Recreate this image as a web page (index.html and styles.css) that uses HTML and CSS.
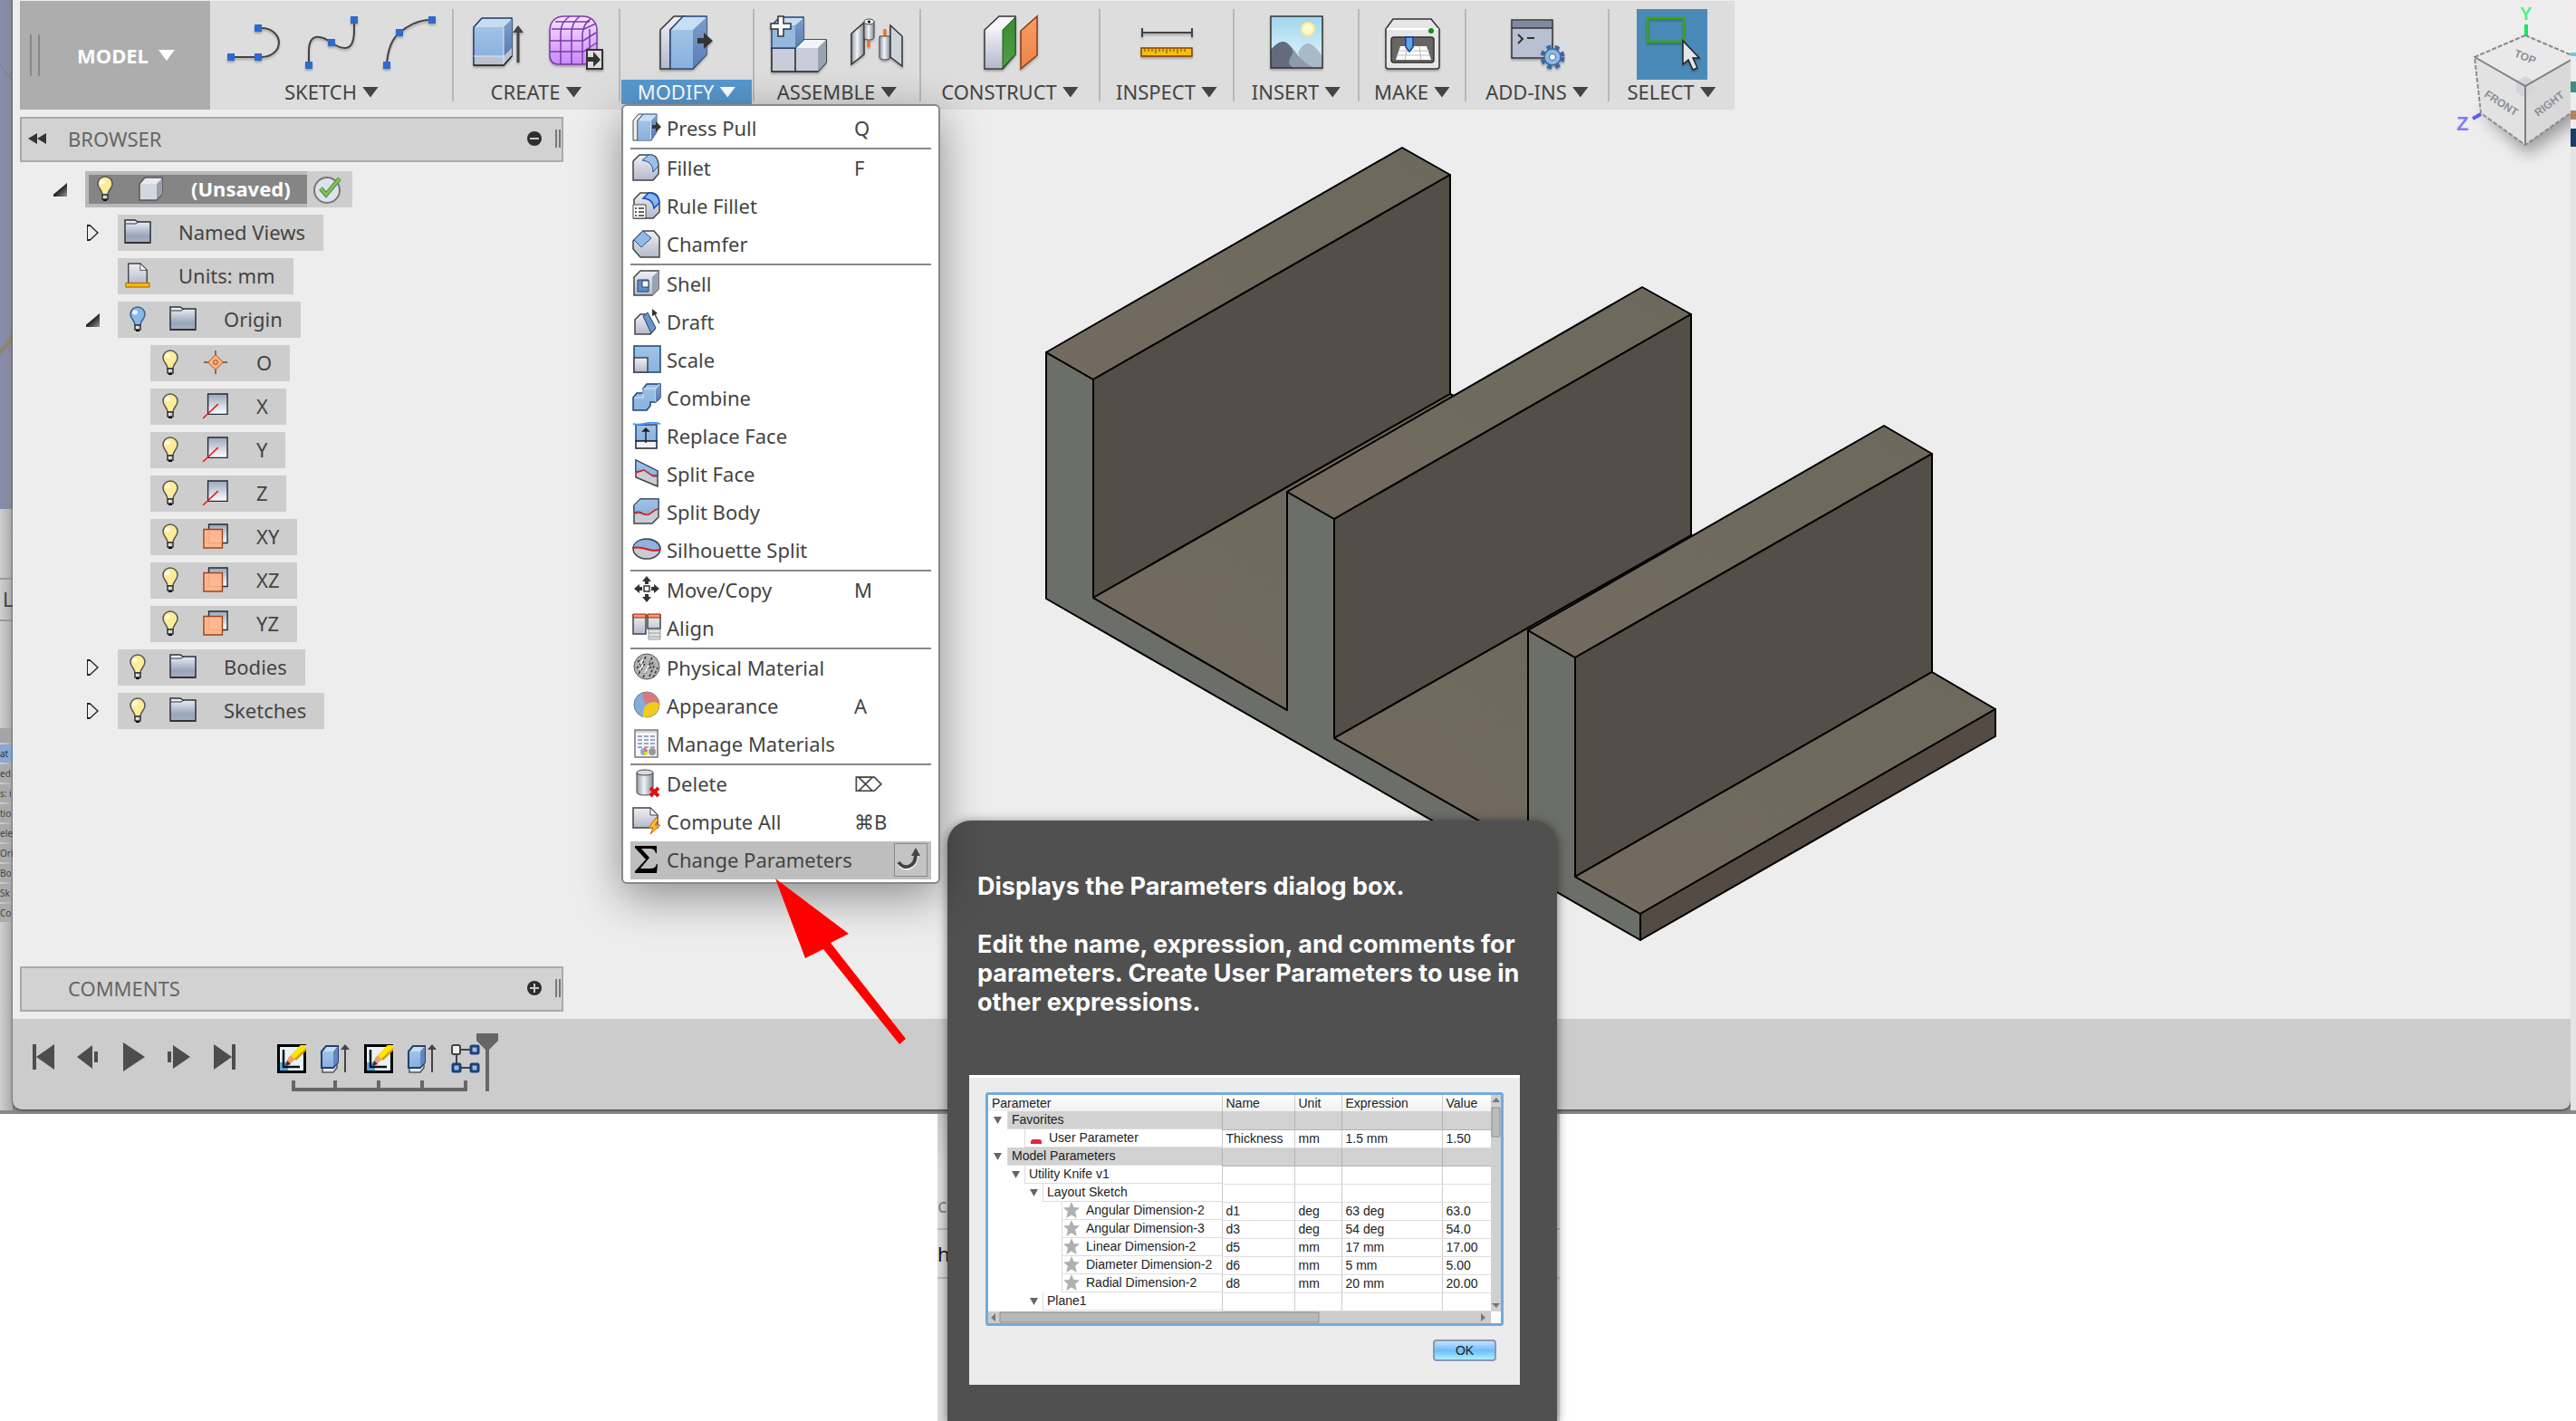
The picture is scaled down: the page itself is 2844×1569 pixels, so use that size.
FILE: index.html
```html
<!DOCTYPE html>
<html lang="en">
<head>
<meta charset="utf-8">
<title>Modify menu</title>
<link rel="stylesheet" href="styles.css">
</head>
<body>
<svg class="defs" width="0" height="0" aria-hidden="true">
  <defs>
    <linearGradient id="blue" x1="0" y1="0" x2="0" y2="1"><stop offset="0" stop-color="#a0c3e6"/><stop offset="1" stop-color="#8ab2de"/></linearGradient>
    <linearGradient id="blueSide" x1="0" y1="0" x2="0" y2="1"><stop offset="0" stop-color="#7c9ccb"/><stop offset="1" stop-color="#5a7fb4"/></linearGradient>
    <linearGradient id="gray" x1="0" y1="0" x2="0" y2="1"><stop offset="0" stop-color="#f0f0f5"/><stop offset="1" stop-color="#b4b9cb"/></linearGradient>
    <linearGradient id="folderFill" x1="0" y1="0" x2="0" y2="1"><stop offset="0" stop-color="#f4f6f9"/><stop offset=".7" stop-color="#99a5bb"/><stop offset="1" stop-color="#a5afc3"/></linearGradient>
    <linearGradient id="grayUp" x1="0" y1="0" x2="0" y2="1"><stop offset="0" stop-color="#9aa6bb"/><stop offset="1" stop-color="#fff"/></linearGradient>
    <linearGradient id="cyl" x1="0" y1="0" x2="1" y2="0"><stop offset="0" stop-color="#8f99a5"/><stop offset=".45" stop-color="#f2f4f7"/><stop offset="1" stop-color="#7d8894"/></linearGradient>
    <linearGradient id="green" x1="0" y1="0" x2="0" y2="1"><stop offset="0" stop-color="#3c8a32"/><stop offset="1" stop-color="#4f9e45"/></linearGradient>
    <linearGradient id="orange" x1="0" y1="0" x2="0" y2="1"><stop offset="0" stop-color="#fb9b62"/><stop offset="1" stop-color="#e8864c"/></linearGradient>
    <linearGradient id="purple" x1="0" y1="0" x2="0" y2="1"><stop offset="0" stop-color="#f6e4ff"/><stop offset="1" stop-color="#c987ff"/></linearGradient>
    <linearGradient id="sky" x1="0" y1="0" x2="0" y2="1"><stop offset="0" stop-color="#9fd6ee"/><stop offset="1" stop-color="#e8f7fc"/></linearGradient>
    <linearGradient id="topFace" x1="0" y1="1" x2="1" y2="0"><stop offset="0" stop-color="#736a60"/><stop offset="1" stop-color="#6c695c"/></linearGradient>
  </defs>
  <symbol id="bulb" viewBox="0 0 18 28"><path d="M9 1a8 8 0 0 0-8 8c0 5 5 7 5 12h6c0-5 5-7 5-12a8 8 0 0 0-8-8z" fill="#ffeb98" stroke="#555" stroke-width="1.5"/><ellipse cx="6" cy="7" rx="3" ry="2.5" fill="#fffbe6"/><path d="M6 21h6v5H6z" fill="#ccc" stroke="#333" stroke-width="1.5"/><path d="M8 22v3" stroke="#fff"/><path d="M7 27h4" stroke="#111" stroke-width="2"/></symbol>
  <symbol id="bulb-off" viewBox="0 0 18 28"><path d="M9 1a8 8 0 0 0-8 8c0 5 5 7 5 12h6c0-5 5-7 5-12a8 8 0 0 0-8-8z" fill="#86b9ea" stroke="#3f5f85" stroke-width="1.5"/><ellipse cx="6" cy="7" rx="3" ry="2.5" fill="#e8f4ff"/><path d="M6 21h6v5H6z" fill="#ccc" stroke="#333" stroke-width="1.5"/><path d="M8 22v3" stroke="#fff"/><path d="M7 27h4" stroke="#111" stroke-width="2"/></symbol>
  <symbol id="folder" viewBox="0 0 30 28"><path d="M1 26V1h11l3 2h14v23z" fill="url(#folderFill)" stroke="#2b3140" stroke-width="1.5"/><path d="M2 5h11l3-2" fill="none" stroke="#2b3140"/><path d="M1 26h28" stroke="#333" stroke-width="2"/></symbol>
  <symbol id="axis" viewBox="0 0 30 30"><path d="M6 1h23v24H6z" fill="url(#grayUp)" stroke="#222b3a" stroke-width="1.5"/><path d="M0 30L18 13" stroke="#f01010" stroke-width="1.5"/></symbol>
  <symbol id="plane" viewBox="0 0 30 30"><path d="M7 1h22v22H7z" fill="url(#grayUp)" stroke="#222b3a" stroke-width="1.5"/><path d="M1 7h22v22H1z" fill="#ffb48a" fill-opacity=".92" stroke="#a0441a" stroke-width="1.5"/></symbol>
  <symbol id="sketch-feature" viewBox="0 0 32 32"><path d="M1.5 1.5h29v29h-29z" fill="#e9f3fb" stroke="#000" stroke-width="3"/><path d="M3 20h9v9H3z" fill="#4db0e8"/><path d="M7 6v19h18" fill="none" stroke="#111" stroke-width="2.5"/><path d="M9 24l3-9L26 1l6 2v3L15 21z" fill="#f0a068"/><path d="M15 12L26 1h6v5L20 17z" fill="#ffe600"/><path d="M19 16L32 4v3L21 18z" fill="#d69a00"/><path d="M9 24l2-6 4 4z" fill="#333"/></symbol>
  <symbol id="extrude-feature" viewBox="0 0 32 32"><path d="M2 25h12l4-6v7l-4 5H2z" fill="#e6e8ee" stroke="#555" stroke-width="1.5"/><path d="M1 8l5-6h13v18l-5 6H1z" fill="#c9def3" stroke="#223f74" stroke-width="2"/><path d="M2 8h12v17H2z" fill="url(#blue)"/><path d="M14 8l5-6v18l-5 5z" fill="#6287bd"/><path d="M27 31V4" stroke="#444" stroke-width="2"/><path d="M22 6l5-6 5 6z" fill="#444"/></symbol>
</svg>

<main class="screen">
  <aside class="behind-left" aria-hidden="true">
    <div class="photo"></div>
    <p class="big-letter">L</p>
    <ul class="clipped-list">
      <li class="lit">at</li><li>ed</li><li>s: i</li><li>tio</li><li>ele</li><li>Ori</li><li>Bo</li><li>Sk</li><li>Co</li>
    </ul>
  </aside>

  <section class="window">
    <div class="viewport">
      <svg class="model" aria-label="Model">
        <g stroke="#000" stroke-width="2" stroke-linejoin="round">
          <path d="M1141 661L1797 1038L1797 1009L1725 968L1725 726L1673 696L1673 937L1459 815L1459 573L1407 543L1407 784L1193 660L1193 419L1141 389Z" fill="#6c6e69"/>
          <path d="M1141 389L1534 163L1587 193L1193 419Z" fill="url(#topFace)"/>
          <path d="M1193 419L1587 193L1587 435L1193 660Z" fill="#534e47"/>
          <path d="M1193 660L1587 435L1593 438L1407 543L1407 784Z" fill="url(#topFace)"/>
          <path d="M1407 543L1799 317L1853 347L1459 573Z" fill="url(#topFace)"/>
          <path d="M1459 573L1853 347L1853 591L1459 815Z" fill="#534e47"/>
          <path d="M1459 815L1853 591L1859 592L1673 696L1673 937Z" fill="url(#topFace)"/>
          <path d="M1673 696L2066 470L2119 501L1725 726Z" fill="url(#topFace)"/>
          <path d="M1725 726L2119 501L2119 742L1725 968Z" fill="#534e47"/>
          <path d="M1725 968L2119 742L2189 783L1797 1009Z" fill="url(#topFace)"/>
          <path d="M1797 1009L2189 783V813L1797 1038Z" fill="#534b44"/>
        </g>
      </svg>

      <svg class="viewcube" width="126" height="180" viewBox="2711 0 126 180" aria-label="View cube">
        <defs><filter id="soft" x="-40%" y="-40%" width="180%" height="180%"><feGaussianBlur stdDeviation="9"/></filter></defs>
        <path d="M2741 125l48 45 60-40v-50z" fill="#000" opacity=".35" filter="url(#soft)"/>
        <path d="M2731 63l56-24 56 24-56 32z" fill="#e9e9e9"/>
        <path d="M2731 63l56 32v65l-49-35z" fill="#e2e2e2"/>
        <path d="M2787 95l56-32-6 62-50 35z" fill="#d9d9d9"/>
        <path d="M2777 90l10-6 10 6v12l-10 6-10-6z" fill="#d3d5d9"/>
        <path d="M2787 39l-56 24 7 62 49 35 50-35M2787 39l56 24" fill="none" stroke="#8c8c8c" stroke-width="2" stroke-dasharray="5 2"/>
        <path d="M2731 63l56 32 56-32M2787 95v65" fill="none" stroke="#808080" stroke-width="2"/>
        <path d="M2788 27v12" stroke="#13e85e" stroke-width="4"/>
        <path d="M2738 126l-9 5" stroke="#5a5af5" stroke-width="4"/>
        <g class="cube-text">
          <text x="2781" y="22" class="axis-y">Y</text>
          <text x="2711" y="144" class="axis-z">Z</text>
          <text x="2741" y="106" transform="rotate(33 2741 106)">FRONT</text>
          <text x="2801" y="129" transform="rotate(-37 2801 129)">RIGHT</text>
          <text x="2774" y="62" transform="rotate(22 2774 62)">TOP</text>
        </g>
      </svg>

      <nav class="toolbar" aria-label="Toolbar">
        <button class="workspace"><span class="grip"></span><span>MODEL</span><i class="tri"></i></button>

        <div class="group">
          <div class="icons">
            <svg class="ico" viewBox="0 0 64 72"><path d="M37 19h4a19 16 0 0 1 0 32H7" fill="none" stroke="#444" stroke-width="2"/><path d="M33 15h8v8h-8zM33 47h8v8h-8zM3 47h8v8H3z" fill="#2e69d0"/></svg>
            <svg class="ico" viewBox="0 0 64 72"><path d="M7 60V45C7 22 22 28 32 35S57 48 57 22V10" fill="none" stroke="#444" stroke-width="2"/><path d="M53 6h8v8h-8zM28 31h8v8h-8zM3 56h8v8H3z" fill="#2e69d0"/></svg>
            <svg class="ico" viewBox="0 0 64 72"><path d="M7 60C8 40 14 30 21 24S42 9 57 10" fill="none" stroke="#444" stroke-width="2"/><path d="M53 6h8v8h-8zM17 20h8v8h-8zM3 56h8v8H3z" fill="#2e69d0"/></svg>
          </div>
          <button class="label">SKETCH<i class="tri"></i></button>
        </div>

        <div class="group">
          <div class="icons">
            <svg class="ico" viewBox="0 0 64 72"><path d="M6 18l9-10h33v42l-9 10H6z" fill="#c6dcf1" stroke="#1c3a68" stroke-width="1.5"/><path d="M7 18h32v32H7z" fill="url(#blue)"/><path d="M39 18l9-9v33l-9 9z" fill="url(#blueSide)"/><path d="M7 50h32v10H7zM39 50l9-9v9l-9 10z" fill="#bcc2d0"/><path d="M39 18v42M6 50h33" stroke="#dfeaf5"/><path d="M6 60h33l9-10" fill="none" stroke="#222" stroke-width="1.5"/><path d="M55 57V22" stroke="#444" stroke-width="3"/><path d="M49 24l6-8 6 8z" fill="#444"/></svg>
            <svg class="ico" viewBox="0 0 64 72"><path d="M4 22C4 12 10 6 20 6h20c10 0 16 6 16 16v18c0 12-6 19-16 19H14C7 59 4 55 4 49z" fill="url(#purple)" stroke="#7d38a8" stroke-width="1.5"/><path d="M16 59V24c0-8 4-14 10-18M28 59V24c0-8 4-14 9-18M40 59V25C41 18 44 12 49 9M48 56V20M4 33h37l14-9M4 45h37l15-10M6 20h36L55 14M10 12h38" fill="none" stroke="#7d38a8" stroke-width="1.5"/><path d="M45 43h17v21H45z" fill="#ddd" stroke="#333" stroke-width="2"/><path d="M45 51h7v-6l8 9-8 8v-6h-7z" fill="#333"/></svg>
          </div>
          <button class="label">CREATE<i class="tri"></i></button>
        </div>

        <div class="group active">
          <div class="icons">
            <svg class="ico" viewBox="0 0 64 72"><path d="M3 21L18 6h12L14 21v43H3z" fill="url(#gray)" stroke="#333" stroke-width="1.5"/><path d="M14 21L28 6h26v42L39 64H14z" fill="#c8def3" stroke="#1f4278" stroke-width="1.5"/><path d="M15 21h24v42H15z" fill="url(#blue)"/><path d="M39 21L54 7v41L39 63z" fill="url(#blueSide)"/><path d="M44 30h7v-6l10 9-10 9v-6h-7z" fill="#333"/></svg>
          </div>
          <button class="label" aria-expanded="true">MODIFY<i class="tri"></i></button>

          <div class="menu" role="menu">
            <button class="item" role="menuitem"><svg viewBox="0 0 32 32"><path d="M1 8l6-7h5L6 8v22H1z" fill="#eee" stroke="#444"/><path d="M6 8l6-7h15v20l-6 9H6z" fill="#c8def3" stroke="#1f4278"/><path d="M6.5 8.5H20v21H6.5z" fill="url(#blue)"/><path d="M21 8l6-6v19l-6 8z" fill="url(#blueSide)"/><path d="M22 13h4V9l6 6-6 6v-4h-4z" fill="#333"/></svg><span>Press Pull</span><kbd>Q</kbd></button>
            <hr>
            <button class="item" role="menuitem"><svg viewBox="0 0 32 32"><path d="M1 9l7-7h12c6 0 9 5 9 12v9l-6 7H1z" fill="url(#gray)" stroke="#444" stroke-width="1.5"/><path d="M11 8l7-6c7-1 10 4 11 12l-6 7c0-8-4-12-12-13z" fill="#9cc2e8" stroke="#2a5088"/></svg><span>Fillet</span><kbd>F</kbd></button>
            <button class="item" role="menuitem"><svg viewBox="0 0 32 32"><path d="M2 9l7-7h12c6 0 9 5 9 12v9l-7 7H2z" fill="url(#gray)" stroke="#444" stroke-width="1.5"/><path d="M12 8l6-6c8-1 12 5 12 11l-6 6c-1-7-5-11-12-11z" fill="#86b6f0" stroke="#0f4bc0" stroke-width="1.5"/><path d="M1 15h14v15H1z" fill="#fff" stroke="#444"/><path d="M3 19h2m2 0h6M3 23h2m2 0h6M3 27h2m2 0h6" stroke="#333" stroke-width="1.5"/></svg><span>Rule Fillet</span></button>
            <button class="item" role="menuitem"><svg viewBox="0 0 32 32"><path d="M1 13L12 2h12l6 7v22H9L1 22z" fill="url(#gray)" stroke="#444" stroke-width="1.5"/><path d="M2 12L12 2l9 8-11 10z" fill="#93bae4" stroke="#2a5088"/></svg><span>Chamfer</span></button>
            <hr>
            <button class="item" role="menuitem"><svg viewBox="0 0 32 32"><path d="M2 9l7-7h20v20l-7 7H2z" fill="url(#gray)" stroke="#444" stroke-width="1.5"/><path d="M22 9l7-7v20l-7 7z" fill="#98a2b0"/><path d="M6 12h12v13H6z" fill="#5f8fc6" stroke="#1f4278"/><path d="M11 13h7v7h-7z" fill="#fff" stroke="#1f4278"/></svg><span>Shell</span></button>
            <button class="item" role="menuitem"><svg viewBox="0 0 32 32"><path d="M3 14l6-6h8l8 16-5 6H3z" fill="url(#gray)" stroke="#444" stroke-width="1.5"/><path d="M12 10l5-4 9 17-5 6z" fill="#6d95cc" stroke="#1f3f70"/><path d="M30 18L24 6" stroke="#444" stroke-width="1.5"/><path d="M22 2l6 5-6 3z" fill="#333"/></svg><span>Draft</span></button>
            <button class="item" role="menuitem"><svg viewBox="0 0 32 32"><path d="M2 1h29v29H2z" fill="url(#blue)" stroke="#1f4278" stroke-width="1.5"/><path d="M2 14h15v16H2z" fill="url(#gray)" stroke="#444" stroke-width="1.5"/></svg><span>Scale</span></button>
            <button class="item" role="menuitem"><svg viewBox="0 0 32 32"><path d="M1 16l4-5h7V6l4-5h15v15l-5 5h-6v4l-4 5H1z" fill="url(#blue)" stroke="#1f4278" stroke-width="1.5"/><path d="M12 6h14l4-5M26 6v15M2 16h10V7" fill="none" stroke="#d9e9f8"/><path d="M26 7l5-6v15l-5 4z" fill="url(#blueSide)"/></svg><span>Combine</span></button>
            <button class="item" role="menuitem"><svg viewBox="0 0 32 32"><path d="M4 4h23v18H4z" fill="url(#blue)" stroke="#1f4278" stroke-width="1.5"/><path d="M1 3c8 3 16-4 30 0" fill="none" stroke="#4b9af5" stroke-width="2"/><path d="M4 22h23v8H4z" fill="#f0f2f6" stroke="#222" stroke-width="1.5"/><path d="M15 24V10M12 11l3-3 3 3z" fill="#222" stroke="#222" stroke-width="1.5"/></svg><span>Replace Face</span></button>
            <button class="item" role="menuitem"><svg viewBox="0 0 32 32"><path d="M4 1l24 12v17L4 20z" fill="#c8cdd6" stroke="#444" stroke-width="1.5"/><path d="M4 1l24 12v6h-5L13 12l-9 2z" fill="url(#blue)" stroke="#1f4278"/><path d="M4 15l9-3 9 6h6" fill="none" stroke="#e31a1a" stroke-width="1.5"/></svg><span>Split Face</span></button>
            <button class="item" role="menuitem"><svg viewBox="0 0 32 32"><path d="M2 9l7-7h20v20l-7 7H2z" fill="#c8ccd6" stroke="#444" stroke-width="1.5"/><path d="M2 17V9l7-7h20v11c-9 2-10 10-17 5-3-2-5-3-10-1z" fill="url(#blue)" stroke="#1f4278"/><path d="M2 18c9-3 11 3 16 1s8-7 11-6" fill="none" stroke="#e31a1a" stroke-width="1.5"/></svg><span>Split Body</span></button>
            <button class="item" role="menuitem"><svg viewBox="0 0 32 32"><ellipse cx="16" cy="15" rx="15" ry="11" fill="#c9ccd6" stroke="#444" stroke-width="1.5"/><path d="M1 14C3 1 28 1 31 15c-12 6-17-4-30-1z" fill="#8fb2df" stroke="#1f4278"/><path d="M1 14c13-3 18 6 30 2" fill="none" stroke="#e31a1a" stroke-width="2"/></svg><span>Silhouette Split</span></button>
            <hr>
            <button class="item" role="menuitem"><svg viewBox="0 0 32 32"><path d="M13 12h6v6h-6z" fill="#fff" stroke="#333" stroke-width="1.5"/><path d="M16 1l5 6h-3v3h-4V7h-3zM16 30l5-6h-3v-3h-4v3h-3zM2 15l6-5v3h3v4H8v3zM30 15l-6-5v3h-3v4h3v3z" fill="#333"/></svg><span>Move/Copy</span><kbd>M</kbd></button>
            <button class="item" role="menuitem"><svg viewBox="0 0 32 32"><path d="M1 2h14v21H1zM17 2h14v15H17z" fill="url(#gray)" stroke="#444" stroke-width="1.5"/><path d="M18 18h13v11H18zM18 22h13M18 26h13" fill="#e2e3e6" stroke="#999"/><path d="M1 1h14v4H1zM17 1h14v4H17z" fill="#ff9a6e" stroke="#8c2a10"/></svg><span>Align</span></button>
            <hr>
            <button class="item" role="menuitem"><svg viewBox="0 0 32 32"><circle cx="16" cy="15" r="14" fill="#b4b4b4" stroke="#555"/><path d="M6 10l4-4m-5 11l7-9m-5 15l8-13m-3 17l9-18m-2 17l6-14m-2 15l5-11M15 4l-4 8m11-7l-3 5m-9 4l-2 6m15-10l-4 8" stroke="#333" stroke-width="1.5" stroke-dasharray="3 2"/><path d="M9 12l3-5m-4 12l4-6m2 9l4-8" stroke="#fff" stroke-width="1.5"/></svg><span>Physical Material</span></button>
            <button class="item" role="menuitem"><svg viewBox="0 0 32 32"><circle cx="16" cy="15" r="14" fill="#84acdf" stroke="#777"/><path d="M12 2c8-3 17 3 18 12-7-2-10-2-14 1-4-3-5-8-4-13z" fill="#d97880"/><path d="M16 15c4-3 8-4 14-1 0 9-7 16-18 15-1-6 1-11 4-14z" fill="#f0cb1c"/></svg><span>Appearance</span><kbd>A</kbd></button>
            <button class="item" role="menuitem"><svg viewBox="0 0 32 32"><path d="M3 1h25v30H3z" fill="#f5f6f8" stroke="#777" stroke-width="1.5"/><path d="M4 2h23v2H4z" fill="#cdd2dc"/><path d="M6 8h19M6 12h19M6 16h19M6 20h19" stroke="#9ba6c4" stroke-width="2" stroke-dasharray="5 2"/><circle cx="13" cy="25" r="4" fill="#84acdf"/><path d="M13 25v-4a4 4 0 0 1 4 4z" fill="#d97880"/><path d="M13 25h4a4 4 0 0 1-4 4z" fill="#f0cb1c"/><circle cx="22" cy="25" r="4" fill="#999"/></svg><span>Manage Materials</span></button>
            <hr>
            <button class="item" role="menuitem"><svg viewBox="0 0 32 32"><path d="M5 4v22c0 4 18 4 18 0V4z" fill="url(#cyl)" stroke="#444"/><ellipse cx="14" cy="4" rx="9" ry="3" fill="#d8dbe2" stroke="#444"/><path d="M20 21l9 9m0-9l-9 9" stroke="#d81414" stroke-width="4"/></svg><span>Delete</span><kbd>⌦</kbd></button>
            <button class="item" role="menuitem"><svg viewBox="0 0 32 32"><path d="M1 1h19l8 8v14H1z" fill="url(#gray)" stroke="#444" stroke-width="1.5"/><path d="M20 1v8h8z" fill="#fff" stroke="#444"/><path d="M26 12l-8 11h5l-3 7 11-10h-6l4-6z" fill="#ffb62e" stroke="#c86a08"/></svg><span>Compute All</span><kbd>⌘B</kbd></button>
            <div class="item current" role="menuitem"><svg viewBox="0 0 32 32"><path d="M3 1h24v8h-1c-1-4-3-5-7-5h-9l9 10L9 26h10c5 0 7-1 8-5h1l-1 10H3v-2l12-13L3 3z" fill="#000"/></svg><span>Change Parameters</span><button class="pin" aria-label="Add to toolbar"><svg viewBox="0 0 32 32"><path d="M3 20c6 10 20 6 20-10" fill="none" stroke="#fff" stroke-width="4"/><path d="M3 19c6 9 19 6 19-9" fill="none" stroke="#444" stroke-width="4"/><path d="M17 12l5-9 5 9z" fill="#444"/></svg></button></div>
          </div>
        </div>

        <div class="group">
          <div class="icons">
            <svg class="ico" viewBox="0 0 64 72"><path d="M3 41h26l9-9h25v25l-9 10H3z" fill="#c9cdd8" stroke="#222" stroke-width="1.5"/><path d="M29 41l9-9h25l-9 9z" fill="#f2f3f6"/><path d="M54 41l9-9v25l-9 10z" fill="#98a2b0"/><path d="M29 41v26" stroke="#222" stroke-width="1.5"/><path d="M3 16l9-9h26v25l-9 9H3z" fill="#c8def3" stroke="#1f4278" stroke-width="1.5"/><path d="M4 16h25v24H4z" fill="#94b8e0"/><path d="M29 16l9-8v24l-9 9z" fill="url(#blueSide)"/><path d="M10 6h6v8h8v6h-8v8h-6v-8H2v-6h8z" fill="#fff" stroke="#333" stroke-width="1.5"/></svg>
            <svg class="ico" viewBox="0 0 64 72"><path d="M5 25l14-12v35L5 59z" fill="url(#cyl)" stroke="#333" stroke-width="1.5"/><path d="M19 12v17c0 4 11 4 11 0V12z" fill="url(#cyl)" stroke="#444"/><ellipse cx="24.5" cy="12" rx="5.5" ry="3" fill="#eef0f3" stroke="#444"/><circle cx="24.5" cy="12" r="1.5"/><path d="M24 33v7M42 20v8" stroke="#ff6a10" stroke-width="3"/><path d="M36 28v23c0 4 12 4 12 0V28z" fill="url(#cyl)" stroke="#444"/><path d="M48 16l13 12v33L48 51z" fill="#ced4dc" stroke="#333" stroke-width="1.5"/></svg>
          </div>
          <button class="label">ASSEMBLE<i class="tri"></i></button>
        </div>

        <div class="group">
          <div class="icons">
            <svg class="ico" viewBox="0 0 64 72"><path d="M4 21L20 6h18v42L24 64H4z" fill="#f7f7f7" stroke="#333" stroke-width="1.5"/><path d="M5 21h19v42H5z" fill="url(#gray)"/><path d="M24 21L38 7v41L24 63z" fill="url(#green)" stroke="#1e5a18"/><path d="M44 22L62 6v43L44 64z" fill="url(#orange)" stroke="#8a3a10" stroke-width="1.5"/></svg>
          </div>
          <button class="label">CONSTRUCT<i class="tri"></i></button>
        </div>

        <div class="group">
          <div class="icons">
            <svg class="ico" viewBox="0 0 64 72"><path d="M5 19v10M60 19v10M5 24h55" stroke="#444" stroke-width="2"/><path d="M4 41h56v9H4z" fill="#f3c10a" stroke="#8a3a10" stroke-width="1.5"/><path d="M8 42v3m4-3v3m4-3v3m4-3v5m4-5v3m4-3v3m4-3v5m4-5v3m4-3v3m4-3v5m4-5v3m4-3v3" stroke="#6a4a00"/></svg>
          </div>
          <button class="label">INSPECT<i class="tri"></i></button>
        </div>

        <div class="group">
          <div class="icons">
            <svg class="ico" viewBox="0 0 64 72"><path d="M4 6h57v57H4z" fill="url(#sky)"/><circle cx="45" cy="20" r="7" fill="#fffbd0" stroke="#ffe88a" stroke-width="2"/><path d="M34 46c8-14 14-14 27 4v13H40z" fill="#a9bac6"/><path d="M4 43c12-14 20-8 27 2s17 18 24 18H4z" fill="#8f9aae"/><path d="M4 43c12-14 18-9 22-3 8 10-10 14 3 23H4z" fill="#636b7c"/><path d="M4 6h57v57H4z" fill="none" stroke="#333" stroke-width="1.5"/></svg>
          </div>
          <button class="label">INSERT<i class="tri"></i></button>
        </div>

        <div class="group">
          <div class="icons">
            <svg class="ico" viewBox="0 0 64 72"><path d="M3 20L11 9h42l9 11v41q0 3-3 3H6q-3 0-3-3z" fill="#e6e6e8" stroke="#333" stroke-width="1.5"/><path d="M4 20h57" stroke="#fff" stroke-width="2"/><circle cx="53" cy="22" r="3" fill="#109018"/><rect x="9" y="29" width="47" height="28" rx="3" fill="#666" stroke="#333" stroke-width="1.5"/><path d="M19 39h29l5 15H14z" fill="#fff"/><path d="M17 44h34M15 49h37M27 39l-3 15M40 39l2 15" stroke="#bbb"/><path d="M25 29h8v11l-4 5-4-5z" fill="#5aa8e4" stroke="#153f9a" stroke-width="1.5"/></svg>
          </div>
          <button class="label">MAKE<i class="tri"></i></button>
        </div>

        <div class="group">
          <div class="icons">
            <svg class="ico" viewBox="0 0 64 72"><path d="M4 10h45v42H4z" fill="#b9c0d2" stroke="#333" stroke-width="1.5"/><path d="M5 11h43v8H5z" fill="#8089a0"/><path d="M4 19h45" stroke="#333" stroke-width="1.5"/><path d="M11 26l5 5-5 5M21 30h8" fill="none" stroke="#333" stroke-width="2"/><circle cx="49" cy="51" r="11" fill="none" stroke="#3c6aa0" stroke-width="5" stroke-dasharray="5 4"/><circle cx="49" cy="51" r="9" fill="#8db8e8" stroke="#3c6aa0" stroke-width="1.5"/><circle cx="49" cy="51" r="3.5" fill="#fff" stroke="#3c6aa0"/></svg>
          </div>
          <button class="label">ADD-INS<i class="tri"></i></button>
        </div>

        <div class="group">
          <div class="icons selected">
            <svg class="ico" viewBox="0 0 64 72"><path d="M5 8h40v26H5z" fill="none" stroke="#36a800" stroke-width="2.5"/><path d="M44 33v26l6-5 5 11 5-2-5-11h7z" fill="#e3e5ef" stroke="#222" stroke-width="1.5"/></svg>
          </div>
          <button class="label">SELECT<i class="tri"></i></button>
        </div>
      </nav>

      <header class="panel-head">
        <svg class="rewind" width="20" height="14" viewBox="0 0 20 14"><path d="M10 1v12L0 7zM20 1v12L10 7z" fill="#333"/></svg>
        <h2>BROWSER</h2>
        <button class="round" aria-label="Collapse"><svg width="18" height="18" viewBox="0 0 18 18"><circle cx="9" cy="9" r="8" fill="#2e2e2e"/><path d="M4 9h10" stroke="#ccc" stroke-width="2"/></svg></button>
        <span class="grip small"></span>
      </header>

      <ul class="tree">
        <li><button class="caret open" aria-label="Collapse"></button><div class="node root"><span class="rootbox"><svg class="bulb"><use href="#bulb"/></svg><svg class="nicon" viewBox="0 0 30 28"><path d="M3 9l6-7h19v18l-6 7H3z" fill="#e8eaf0" stroke="#555" stroke-width="1.5"/><path d="M4 9h18v17H4z" fill="#d3d7e0"/><path d="M22 9l6-6v17l-6 6z" fill="#98a0b0"/></svg><b>(Unsaved)</b></span><svg class="check" width="34" height="32" viewBox="0 0 34 32"><circle cx="16" cy="17" r="14" fill="#dde2ec" stroke="#777" stroke-width="2"/><path d="M9 15l6 7L30 4" fill="none" stroke="#4e8a35" stroke-width="5"/><path d="M9 15l6 7L30 4" fill="none" stroke="#7cc45a" stroke-width="3"/></svg></div></li>
        <li class="d1"><button class="caret" aria-label="Expand"></button><div class="node plain"><svg class="nicon"><use href="#folder"/></svg>Named Views</div></li>
        <li class="d1"><span class="caret none"></span><div class="node plain"><svg class="nicon" viewBox="0 0 30 30"><path d="M4 1h14l8 8v16H4z" fill="url(#gray)" stroke="#444" stroke-width="1.5"/><path d="M18 1v8h8z" fill="#fff" stroke="#444"/><path d="M1 24h28v5H1z" fill="#f5b80c" stroke="#a06000"/></svg>Units: mm</div></li>
        <li class="d1"><button class="caret open" aria-label="Collapse"></button><div class="node"><svg class="bulb"><use href="#bulb-off"/></svg><svg class="nicon"><use href="#folder"/></svg>Origin</div></li>
        <li class="d2"><span class="caret none"></span><div class="node"><svg class="bulb"><use href="#bulb"/></svg><svg class="nicon" viewBox="0 0 30 30"><path d="M1 15h28M15 1v28" stroke="#80401a" stroke-width="1.5"/><path d="M15 6l9 9-9 9-9-9z" fill="#ffb183" stroke="#a04a1a"/><circle cx="15" cy="15" r="2.5" fill="none" stroke="#80401a"/></svg>O</div></li>
        <li class="d2"><span class="caret none"></span><div class="node"><svg class="bulb"><use href="#bulb"/></svg><svg class="nicon"><use href="#axis"/></svg>X</div></li>
        <li class="d2"><span class="caret none"></span><div class="node"><svg class="bulb"><use href="#bulb"/></svg><svg class="nicon"><use href="#axis"/></svg>Y</div></li>
        <li class="d2"><span class="caret none"></span><div class="node"><svg class="bulb"><use href="#bulb"/></svg><svg class="nicon"><use href="#axis"/></svg>Z</div></li>
        <li class="d2"><span class="caret none"></span><div class="node"><svg class="bulb"><use href="#bulb"/></svg><svg class="nicon"><use href="#plane"/></svg>XY</div></li>
        <li class="d2"><span class="caret none"></span><div class="node"><svg class="bulb"><use href="#bulb"/></svg><svg class="nicon"><use href="#plane"/></svg>XZ</div></li>
        <li class="d2"><span class="caret none"></span><div class="node"><svg class="bulb"><use href="#bulb"/></svg><svg class="nicon"><use href="#plane"/></svg>YZ</div></li>
        <li class="d1"><button class="caret" aria-label="Expand"></button><div class="node"><svg class="bulb"><use href="#bulb"/></svg><svg class="nicon"><use href="#folder"/></svg>Bodies</div></li>
        <li class="d1"><button class="caret" aria-label="Expand"></button><div class="node"><svg class="bulb"><use href="#bulb"/></svg><svg class="nicon"><use href="#folder"/></svg>Sketches</div></li>
      </ul>

      <header class="panel-head comments">
        <h2>COMMENTS</h2>
        <button class="round" aria-label="Expand"><svg width="18" height="18" viewBox="0 0 18 18"><circle cx="9" cy="9" r="8" fill="#2e2e2e"/><path d="M4 9h10M9 4v10" stroke="#ccc" stroke-width="2"/></svg></button>
        <span class="grip small"></span>
      </header>
    </div>

    <footer class="timeline">
      <div class="controls">
        <button aria-label="Go to start"><svg viewBox="0 0 32 32"><path d="M4 2h4v28H4zM8 16L28 2v28z"/></svg></button>
        <button aria-label="Step back"><svg viewBox="0 0 32 32"><path d="M3 16L20 3v26zM22 10h4v12h-4z"/></svg></button>
        <button aria-label="Play"><svg viewBox="0 0 32 32"><path d="M4 0v32l24-16z"/></svg></button>
        <button aria-label="Step forward"><svg viewBox="0 0 32 32"><path d="M3 10h4v12H3zM9 3v26l19-13z"/></svg></button>
        <button aria-label="Go to end"><svg viewBox="0 0 32 32"><path d="M4 2v28l20-14zM24 2h4v28h-4z"/></svg></button>
      </div>
      <div class="features">
        <div class="feature-row">
          <button aria-label="Sketch"><svg><use href="#sketch-feature"/></svg></button>
          <button aria-label="Extrude"><svg><use href="#extrude-feature"/></svg></button>
          <button aria-label="Sketch"><svg><use href="#sketch-feature"/></svg></button>
          <button aria-label="Extrude"><svg><use href="#extrude-feature"/></svg></button>
          <button aria-label="Pattern"><svg viewBox="0 0 32 32"><path d="M6 6h20M6 6v20h20" fill="none" stroke="#444" stroke-width="2"/><rect x="1" y="1" width="9" height="10" rx="2" fill="#eee" stroke="#444" stroke-width="2"/><g fill="#8fbdf0" stroke="#1f3f78" stroke-width="3"><rect x="22" y="2" width="8" height="8" rx="1"/><rect x="2" y="22" width="8" height="8" rx="1"/><rect x="22" y="22" width="8" height="8" rx="1"/></g></svg></button>
        </div>
        <svg class="bracket" width="240" height="12" viewBox="0 0 240 12"><path d="M26 0v10h190V0M72 0v10M120 0v10M168 0v10" fill="none" stroke="#666" stroke-width="4"/></svg>
        <svg class="marker" width="24" height="64" viewBox="0 0 24 64"><path d="M0 0h24v8L14 18v46h-4V18L0 8z" fill="#666"/></svg>
      </div>
    </footer>
  </section>

  <aside class="behind-right" aria-hidden="true"></aside>
</main>

<div class="behind-bottom" aria-hidden="true"><p>c</p><p class="dark">h</p></div>

<section class="tooltip" role="tooltip">
  <p>Displays the Parameters dialog box.</p>
  <p>Edit the name, expression, and comments for parameters. Create User Parameters to use in other expressions.</p>
  <div class="preview">
    <div class="frame">
      <table>
        <colgroup><col><col class="c-name"><col class="c-unit"><col class="c-expr"><col class="c-val"></colgroup>
        <thead><tr><th>Parameter</th><th>Name</th><th>Unit</th><th>Expression</th><th>Value</th></tr></thead>
        <tbody>
          <tr class="cat"><td class="l0"><i></i><span>Favorites</span></td><td></td><td></td><td></td><td></td></tr>
          <tr><td class="leaf user"><i></i><span>User Parameter</span></td><td>Thickness</td><td>mm</td><td>1.5 mm</td><td>1.50</td></tr>
          <tr class="cat"><td class="l0"><i></i><span>Model Parameters</span></td><td></td><td></td><td></td><td></td></tr>
          <tr><td class="l1"><i></i><span>Utility Knife v1</span></td><td></td><td></td><td></td><td></td></tr>
          <tr><td class="l2"><i></i><span>Layout Sketch</span></td><td></td><td></td><td></td><td></td></tr>
          <tr><td class="leaf"><b></b><span>Angular Dimension-2</span></td><td>d1</td><td>deg</td><td>63 deg</td><td>63.0</td></tr>
          <tr><td class="leaf"><b></b><span>Angular Dimension-3</span></td><td>d3</td><td>deg</td><td>54 deg</td><td>54.0</td></tr>
          <tr><td class="leaf"><b></b><span>Linear Dimension-2</span></td><td>d5</td><td>mm</td><td>17 mm</td><td>17.00</td></tr>
          <tr><td class="leaf"><b></b><span>Diameter Dimension-2</span></td><td>d6</td><td>mm</td><td>5 mm</td><td>5.00</td></tr>
          <tr><td class="leaf"><b></b><span>Radial Dimension-2</span></td><td>d8</td><td>mm</td><td>20 mm</td><td>20.00</td></tr>
          <tr><td class="l2"><i></i><span>Plane1</span></td><td></td><td></td><td></td><td></td></tr>
        </tbody>
      </table>
      <div class="vbar"><svg width="11" height="238" viewBox="0 0 11 238"><path d="M1 8l5-5 4 5zM1 230l5 5 4-5z" fill="#777"/><path d="M1 14h9v32H1z" fill="#bbb" stroke="#8f8f8f"/></svg></div>
      <div class="hbar"><svg width="554" height="13" viewBox="0 0 554 13"><path d="M8 2v9L3 7zM544 2v9l5-4z" fill="#777"/><path d="M13 1h352v11H13z" fill="#b8b8b8" stroke="#8f8f8f"/></svg></div>
    </div>
    <button class="ok">OK</button>
  </div>
</section>

<svg class="pointer" width="150" height="190" viewBox="850 965 150 190" aria-hidden="true"><path d="M856 970L937 1031L917 1041L1000 1147L993 1153L909 1048L889 1058Z" fill="#f00"/></svg>
</body>
</html>
```
FILE: styles.css
```css
* { box-sizing: border-box; }
body {
  margin: 0;
  min-height: 100vh;
  position: relative;
  overflow: hidden;
  background: #fff;
  color: #444;
  font: 22px/28px "Noto Sans", sans-serif;
}
button {
  font: inherit;
  color: inherit;
  border: 0;
  padding: 0;
  background: none;
}
ul, p, h2 { margin: 0; padding: 0; font: inherit; list-style: none; }
svg { display: block; flex: none; }
.defs { position: absolute; }

.screen {
  display: flex;
  padding-bottom: 4px;
  background: #888;
}
.behind-left {
  width: 14px;
  flex: none;
  overflow: hidden;
  background: linear-gradient(90deg, #cfcfcf, #aaa);
}
.photo {
  height: 562px;
  background:
    linear-gradient(52deg, transparent 47%, #857d78 49%, transparent 52%) 0 60px / 14px 40px no-repeat,
    linear-gradient(-50deg, transparent 40%, #8c8266 49%, transparent 58%) 0 350px / 14px 60px no-repeat,
    linear-gradient(90deg, #858eae, #8a8797);
}
.big-letter {
  margin-top: 76px;
  padding-left: 3px;
  border-top: 2px solid #999;
  border-bottom: 2px solid #999;
  height: 48px;
  line-height: 42px;
}
.clipped-list {
  margin-top: 118px;
  border-top: 16px solid #a5a5a5;
  font-size: 10px;
  line-height: 20px;
  white-space: nowrap;
}
.clipped-list li { background: #aaa; margin-top: 2px; }
.clipped-list .lit { background: #8ba8d2; color: #234; }
.behind-right {
  width: 6px;
  flex: none;
  background: linear-gradient(#f4eaf0 0 40px, #eee 40px 58px, #6cc8e8 58px 62px, #eee 62px 90px, #418a86 90px 102px, #eee 102px 122px, #b5805f 122px 132px, #eee 132px 142px, #1b3c66 142px 162px, #e4e4e4 162px);
}
.window {
  flex: 1;
  min-width: 0;
  border-bottom: 1px solid #555;
  border-radius: 0 0 10px 10px;
  background: #ccc;
  box-shadow: 0 0 3px #333;
}
.viewport {
  position: relative;
  padding: 1px 8px 8px;
  background: #ededed;
}
.model {
  position: absolute;
  left: 0;
  top: 0;
  width: 100%;
  height: 100%;
}
.viewcube { position: absolute; right: 0; top: 0; }
.cube-text { font: 700 12px "Liberation Sans", sans-serif; fill: #8b9097; }
.axis-y { font-size: 20px; fill: #4df28a; }
.axis-z { font-size: 22px; fill: #7f7ff8; }

.toolbar {
  position: relative;
  z-index: 2;
  display: grid;
  grid-template-columns: 210px 268px 184px 148px 184px 198px 148px 138px 118px 158px 139px;
  width: fit-content;
  height: 120px;
  background: #ddd;
}
.workspace {
  display: flex;
  align-items: center;
  gap: 11px;
  padding: 0 12px 0 11px;
  background: #adadad;
  color: #fff;
  font-weight: 700;
}
.grip {
  width: 11px;
  height: 46px;
  border: solid #888;
  border-width: 0 2px;
}
.workspace .grip { margin-right: 30px; }
.tri {
  width: 18px;
  height: 12px;
  background: currentColor;
  clip-path: polygon(0 0, 100% 0, 50% 100%);
}
.group {
  position: relative;
  display: flex;
  flex-direction: column;
  padding-top: 9px;
}
.group::after {
  content: "";
  position: absolute;
  right: -1px;
  top: 9px;
  width: 2px;
  height: 102px;
  background: #b8b8b8;
}
.group:last-child::after { display: none; }
.icons {
  display: flex;
  justify-content: center;
  gap: 22px;
  height: 78px;
  padding-top: 2px;
}
.selected {
  width: 78px;
  margin: 0 auto;
  background: #4a8ab8;
}
.ico { width: 64px; height: 72px; filter: drop-shadow(0 2px 1px #0004); }
.label {
  display: flex;
  align-items: center;
  justify-content: center;
  gap: 6px;
  height: 27px;
  line-height: 27px;
  margin: 0 2px;
}
.active .label { background: #5798cf; color: #fff; }

.menu {
  position: absolute;
  z-index: 3;
  left: 2px;
  top: 114px;
  width: 352px;
  padding: 4px 8px 3px;
  border: 2px solid #888;
  border-radius: 6px;
  background: #fff;
  box-shadow: 0 14px 50px #0006;
}
.item {
  display: flex;
  align-items: center;
  gap: 6px;
  width: 100%;
  height: 42px;
  padding: 0 4px 2px 2px;
  text-align: left;
}
.item > span { width: 201px; white-space: nowrap; }
.item svg { width: 32px; height: 32px; }
.item kbd { font: 22px/28px "Noto Sans", "DejaVu Sans", sans-serif; }
.current { background: #bebebe; }
.current > span { width: auto; flex: 1; }
.pin {
  width: 37px;
  height: 37px;
  padding: 1px;
  border: 1px solid #8a8a8a;
  background: #c4c4c4;
}
.menu hr { margin: 0; border: 0; height: 2px; background: #888; }

.panel-head {
  position: relative;
  display: flex;
  align-items: center;
  width: 600px;
  height: 50px;
  margin-top: 8px;
  padding: 0 1px 2px 7px;
  border: 2px solid #aaa;
  background: #d2d2d2;
  color: #666;
}
.panel-head h2 { flex: 1; margin-left: 24px; }
.comments h2 { margin-left: 44px; }
.small { width: 6px; height: 20px; border-color: #777; margin-left: 14px; }

.tree {
  position: relative;
  display: grid;
  gap: 8px;
  width: fit-content;
  padding: 10px 0 254px 36px;
}
.tree li { display: flex; align-items: center; height: 40px; }
.d1 { margin-left: 36px; }
.d2 { margin-left: 72px; }
.caret { position: relative; width: 36px; height: 20px; flex: none; }
.caret::before, .caret::after {
  content: "";
  position: absolute;
  left: 2px;
  top: 1px;
  width: 13px;
  height: 18px;
  background: #222;
  clip-path: polygon(0 0, 25% 0, 100% 50%, 25% 100%, 0 100%);
}
.caret::after { left: 3px; top: 3px; width: 10px; height: 14px; background: #ededed; }
.open::before { left: 1px; top: 3px; width: 15px; height: 15px; background: linear-gradient(135deg, #111 40%, #999); clip-path: polygon(100% 0, 100% 100%, 0 100%, 0 85%); }
.open::after, .none::before, .none::after { display: none; }
.node {
  display: flex;
  align-items: center;
  height: 40px;
  padding: 0 20px 2px 13px;
  background: #cdcdcd;
}
.bulb { width: 18px; height: 28px; margin-right: 26px; }
.nicon { width: 30px; height: 28px; margin-right: 30px; }
.plain { padding-left: 7px; }
.root { padding: 0; }
.rootbox {
  display: flex;
  align-items: center;
  height: 40px;
  padding: 0 18px 2px 9px;
  border: 4px solid #b9b9b9;
  border-right: 0;
  background: #858585;
  color: #fff;
}
.check { margin: 0 10px 0 6px; }

.timeline {
  display: flex;
  gap: 25px;
  padding: 28px 9px 20px;
}
.controls { display: flex; }
.controls button {
  display: grid;
  grid-template-rows: 28px;
  place-items: center;
  width: 50px;
  height: 28px;
}
.controls svg { width: 32px; height: 32px; fill: #4d4d4f; }
.features { position: relative; }
.feature-row { display: flex; }
.feature-row button { display: grid; place-items: center; width: 48px; height: 32px; }
.feature-row svg { width: 32px; height: 32px; }
.bracket { margin-top: 8px; }
.marker { position: absolute; right: -12px; bottom: 0; }

.behind-bottom {
  position: absolute;
  left: 1035px;
  top: 1230px;
  width: 687px;
  bottom: 0;
  overflow: hidden;
  padding-top: 74px;
  background: linear-gradient(#ccc, #dcdede 60px);
}
.behind-bottom p {
  height: 54px;
  border-bottom: 2px solid #bbb;
  line-height: 52px;
  color: #888;
}
.behind-bottom .dark { color: #111; }

.tooltip {
  position: absolute;
  left: 1046px;
  top: 906px;
  width: 673px;
  bottom: 0;
  padding: 57px 24px 0;
  border-radius: 26px 26px 0 0;
  background: #505050;
  box-shadow: 0 2px 12px #0008;
  color: #fff;
  font: 700 27px/32px Inter, sans-serif;
}
.tooltip p { margin: 0 9px 32px; }
.preview {
  margin-top: 64px;
  width: 608px;
  height: 342px;
  padding: 16px 18px 0;
  border-top: 3px solid #fff;
  background: #ececec;
  color: #222;
  font: 14px/20px "Liberation Sans", sans-serif;
}
.frame {
  display: grid;
  grid-template-columns: 1fr 11px;
  border: 3px solid #74aadb;
  border-radius: 3px;
  background: #fff;
}
.preview table { width: 100%; table-layout: fixed; border-collapse: collapse; }
.preview th, .preview td {
  height: 20px;
  padding: 0 0 0 4px;
  border-left: 1px solid #ccc;
  text-align: left;
  font-weight: 400;
  line-height: 19px;
  white-space: nowrap;
}
.preview th { height: 18px; line-height: 16px; background: linear-gradient(#fff, #f0f0f0); }
.preview td { border-bottom: 1px solid #ddd; }
.preview th:first-child, .preview td:first-child { border-left: 0; border-bottom: 0; }
.c-name { width: 80px; }
.c-unit { width: 52px; }
.c-expr { width: 111px; }
.c-val { width: 54px; }
.cat td { background: #d2d2d2; border-color: #b4b4b4; }
.preview td:first-child { padding: 0; background: #fff; }
.preview td:first-child span {
  display: block;
  margin-left: 21px;
  padding-left: 4px;
  height: 20px;
  border-left: 1px solid #ddd;
  border-bottom: 1px solid #ddd;
}
.preview .cat span { background: #d2d2d2; }
.preview i {
  float: left;
  width: 9px;
  height: 8px;
  margin: 6px 0 0 6px;
  background: #666;
  clip-path: polygon(0 0, 100% 0, 50% 100%);
}
.preview td.l1 span { margin-left: 40px; }
.preview .l1 i { margin-left: 26px; }
.preview td.l2 span { margin-left: 60px; }
.preview .l2 i { margin-left: 46px; }
.preview td.leaf span { margin-left: 81px; padding-left: 26px; }
.preview .leaf b {
  float: left;
  width: 18px;
  height: 18px;
  margin-left: 83px;
  background: #b0b0b0;
  clip-path: polygon(50% 0, 64% 33%, 100% 36%, 73% 60%, 82% 100%, 50% 80%, 18% 100%, 27% 60%, 0 36%, 36% 33%);
}
.preview td.user span { margin-left: 40px; }
.preview .user i { margin: 11px 0 0 47px; width: 12px; height: 5px; background: #e8213c; clip-path: none; border-radius: 3px 3px 0 0; }
.vbar { background: #d0d0d0; }
.hbar { grid-column: 1; background: #ccc; }
.ok {
  display: block;
  width: 70px;
  height: 24px;
  margin: 15px 8px 0 auto;
  border: 2px solid #8899b8;
  border-radius: 4px;
  background: linear-gradient(#c4e2fb, #6fbcfa 50%, #aaf0ff);
  line-height: 18px;
}
.pointer { position: absolute; z-index: 4; left: 850px; top: 965px; }
```
